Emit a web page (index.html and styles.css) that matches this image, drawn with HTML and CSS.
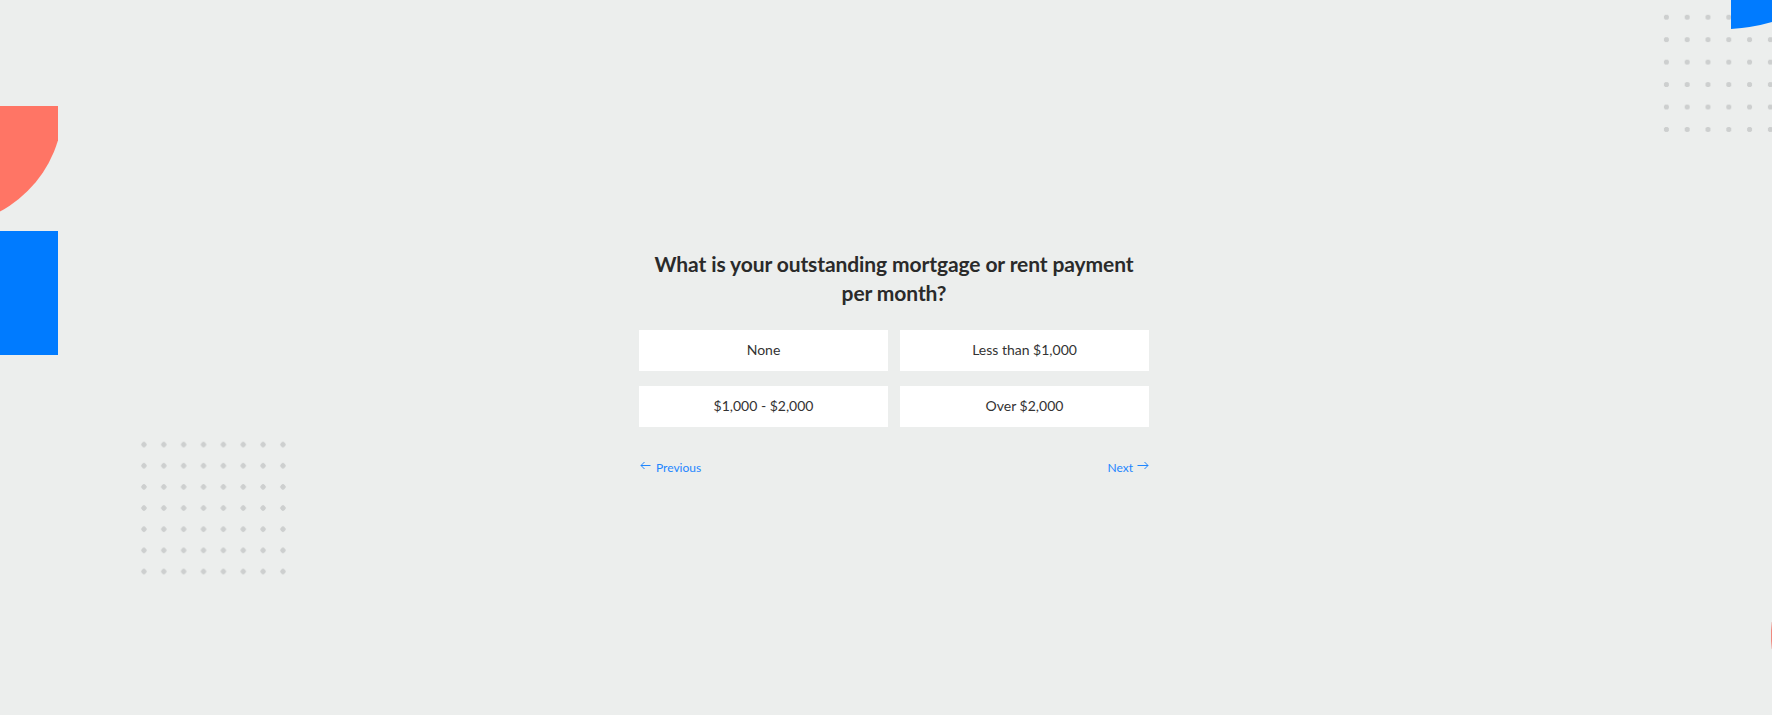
FILE: index.html
```html
<!DOCTYPE html>
<html lang="en">
<head>
<meta charset="utf-8">
<title>Mortgage question</title>
<link rel="stylesheet" href="styles.css">
</head>
<body>
<div class="deco deco-red"><div class="deco-red-circle"></div></div>
<div class="deco deco-blue-rect"></div>
<div class="deco deco-dots-left"></div>
<div class="deco deco-dots-right"></div>
<svg class="deco deco-blue-corner" width="41" height="30" viewBox="0 0 41 30"><path d="M0 0 L0 29 Q22 27.5 41 22 L41 0 Z" fill="#007bff"/></svg>
<div class="deco deco-edge"></div>

<main class="stage">
  <section class="quiz">
    <h1 class="question">What is your outstanding mortgage or rent payment per month?</h1>
    <div class="options">
      <button class="option">None</button>
      <button class="option">Less than $1,000</button>
      <button class="option">$1,000 - $2,000</button>
      <button class="option">Over $2,000</button>
    </div>
    <nav class="nav">
      <a class="nav-link nav-prev" href="#"><svg class="arrow" width="11" height="9" viewBox="0 0 11 9"><path d="M10.5 4.5 H1 M4.5 1 L1 4.5 L4.5 8" fill="none" stroke="#1e86ff" stroke-width="1"/></svg>Previous</a>
      <a class="nav-link nav-next" href="#">Next<svg class="arrow" width="12" height="9" viewBox="0 0 12 9"><path d="M0.5 4.5 H11 M7.5 1 L11 4.5 L7.5 8" fill="none" stroke="#1e86ff" stroke-width="1"/></svg></a>
    </nav>
  </section>
</main>
</body>
</html>
```
FILE: styles.css
```css
html, body {
  margin: 0;
  padding: 0;
}
body {
  background: #eceeed;
  font-family: Lato, "Open Sans", sans-serif;
  color: #2b2b2b;
  width: 1772px;
  height: 715px;
  overflow: hidden;
  position: relative;
}
.deco {
  position: absolute;
}
.deco-red {
  left: 0;
  top: 106px;
  width: 58px;
  height: 120px;
  overflow: hidden;
}
.deco-red-circle {
  position: absolute;
  left: -177px;
  top: -120px;
  width: 240px;
  height: 240px;
  border-radius: 50%;
  background: #ff7565;
}
.deco-blue-rect {
  left: 0;
  top: 231px;
  width: 58px;
  height: 124px;
  background: #007bff;
}
.deco-dots-left {
  left: 134px;
  top: 434px;
  width: 159px;
  height: 148px;
  background-image: radial-gradient(circle, #cdcfcf 2.4px, transparent 2.9px);
  background-size: 19.86px 21.17px;
  background-position: 0 0;
}
.deco-dots-right {
  left: 1656px;
  top: 6px;
  width: 116px;
  height: 135px;
  background-image: radial-gradient(circle, #cdcfcf 2.4px, transparent 2.9px);
  background-size: 20.8px 22.46px;
}
.deco-blue-corner {
  left: 1731px;
  top: 0;
}
.deco-edge {
  left: 1771px;
  top: 622px;
  width: 1px;
  height: 27px;
  background: linear-gradient(to bottom, rgba(240, 122, 112, 0.2), #f08a80 30%, #f08a80 70%, rgba(240, 122, 112, 0.2));
}
.stage {
  display: flex;
  justify-content: center;
  padding-left: 16px;
  padding-top: 249px;
}
.quiz {
  width: 510px;
}
.question {
  margin: 0 0 23px;
  font-size: 21px;
  line-height: 29px;
  letter-spacing: -0.1px;
  font-weight: 700;
  text-align: center;
  color: #2a2a2a;
  padding: 0 10px;
}
.options {
  display: grid;
  grid-template-columns: 1fr 1fr;
  column-gap: 12px;
  row-gap: 15px;
}
.option {
  height: 41px;
  border: 0;
  background: #ffffff;
  font-family: Lato, "Open Sans", sans-serif;
  font-size: 14px;
  color: #333333;
  padding: 0 0 2px;
  cursor: pointer;
}
.nav {
  margin-top: 33px;
  display: flex;
  justify-content: space-between;
  font-size: 12px;
}
.nav-link {
  color: #1e86ff;
  text-decoration: none;
  display: flex;
  align-items: center;
}
.nav-prev {
  gap: 5px;
  padding-left: 1px;
}
.nav-next {
  gap: 4px;
}
.arrow {
  display: block;
  margin-top: -4px;
}
```
